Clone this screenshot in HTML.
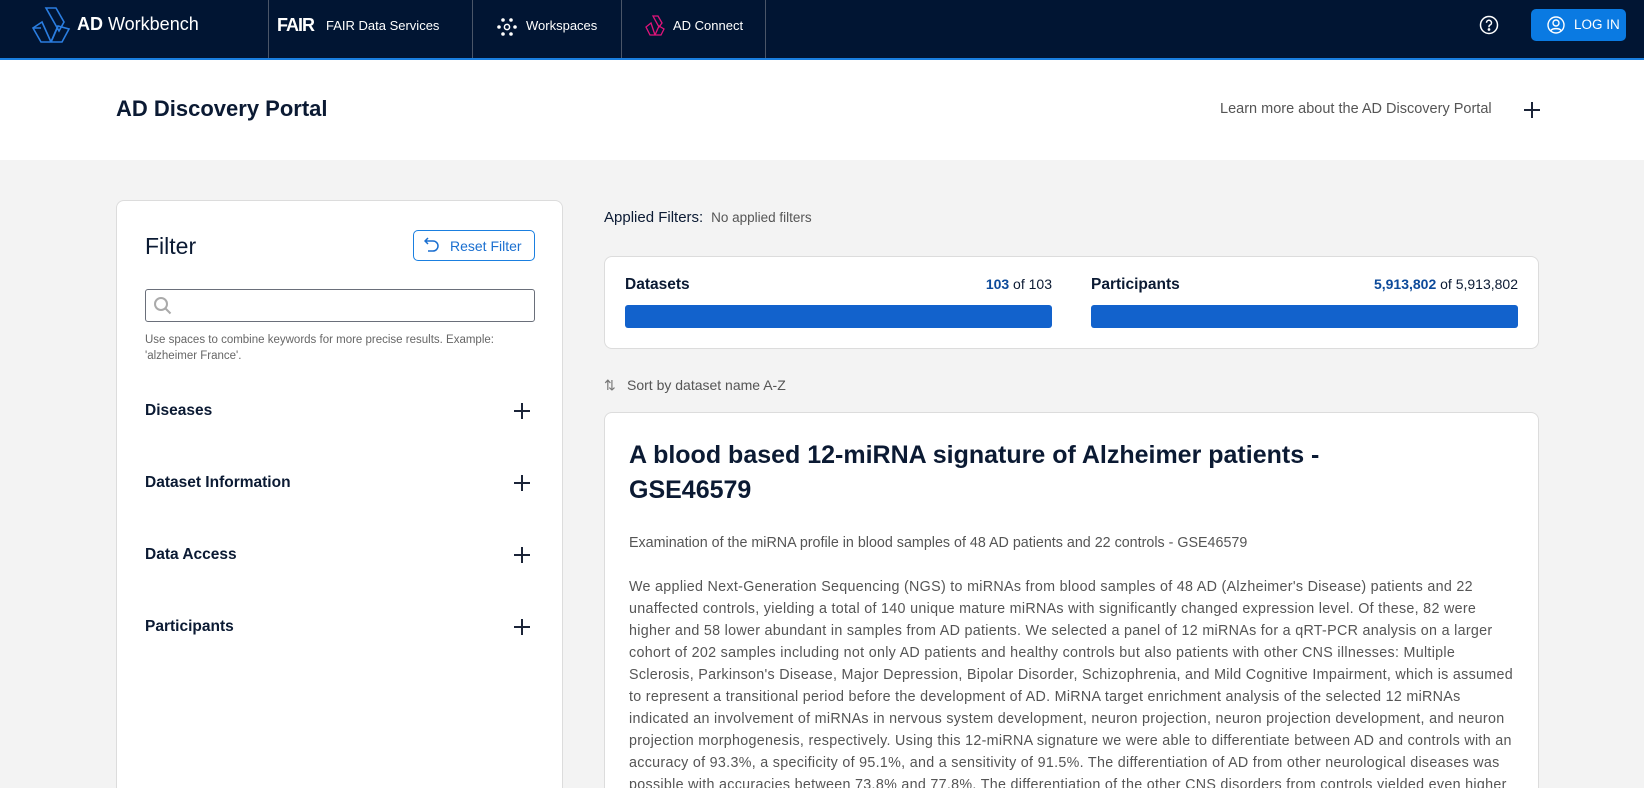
<!DOCTYPE html>
<html><head><meta charset="utf-8"><style>
*{box-sizing:border-box;margin:0;padding:0}
html,body{width:1644px;height:788px;overflow:hidden}
body{background:#f3f3f3;font-family:"Liberation Sans",sans-serif;color:#0b1a33}
#w{position:relative;width:1644px;height:788px;overflow:hidden}
.a{position:absolute}
.hdr{left:0;top:0;width:1644px;height:58px;background:#011533}
.bl{left:0;top:58px;width:1644px;height:2px;background:#1a7fe0}
.div{top:0;width:1px;height:58px;background:#4a5568}
.nav{color:#fff;font-size:13px;top:18px}
.banner{left:0;top:60px;width:1644px;height:100px;background:#fff}
.card{background:#fff;border:1px solid #dcdcdc;border-radius:8px}
.plus{width:16px;height:16px}
.plus:before,.plus:after{content:"";position:absolute;background:#1b2438}
.plus:before{left:7px;top:0;width:1.6px;height:16px}
.plus:after{top:7px;left:0;height:1.6px;width:16px}
.row{left:145px;font-size:15.5px;font-weight:bold}
.bar{height:23px;background:#1262cc;border-radius:3px}
p.t{font-size:14.3px;color:#555;line-height:22px}
p.p{font-size:14.3px;letter-spacing:0.3px;color:#555;line-height:22px;white-space:nowrap}
</style></head><body><div id="w">
<div class="a hdr"></div><div class="a bl"></div>
<svg class="a" style="left:26px;top:6px" width="48" height="38" viewBox="0 0 48 38" fill="none" stroke="#2a7de0" stroke-width="1.6"><path d="M20 2h10l8 14-5 9-13-23zM16 16l-9 6 8 14h10L16 16zM32 20l-7 16h11l7-13z"/><path d="M7 22h8M25 36l7-16"/></svg>
<div class="a" style="left:77px;top:14px;color:#fff;font-size:18px"><b>AD</b> Workbench</div>
<div class="a div" style="left:268px"></div><div class="a div" style="left:472px"></div><div class="a div" style="left:621px"></div><div class="a div" style="left:765px"></div>
<div class="a" style="left:277px;top:15px;color:#fff;font-size:18px;font-weight:900;letter-spacing:-1px">FAIR</div>
<div class="a nav" style="left:326px">FAIR Data Services</div>
<svg class="a" style="left:497px;top:17px" width="20" height="20" viewBox="0 0 20 20" fill="#fff"><circle cx="10" cy="10" r="2.6" fill="none" stroke="#fff" stroke-width="1.5"/><circle cx="6" cy="3" r="1.8"/><circle cx="14" cy="3" r="1.8"/><circle cx="6" cy="17" r="1.8"/><circle cx="14" cy="17" r="1.8"/><circle cx="2" cy="10" r="1.8"/><circle cx="18" cy="10" r="1.8"/></svg>
<div class="a nav" style="left:526px">Workspaces</div>
<svg class="a" style="left:645px;top:15px" width="20" height="22" viewBox="0 0 20 22" fill="none" stroke="#e0147a" stroke-width="1.3"><path d="M8 1h5l4 7-3 4-6-11zM6 8l-5 4 4 8h5L6 8zM14 11l-4 9h6l3-6z"/></svg>
<div class="a nav" style="left:673px">AD Connect</div>
<svg class="a" style="left:1479px;top:15px" width="20" height="20" viewBox="0 0 20 20" fill="none" stroke="#fff" stroke-width="1.5"><circle cx="10" cy="10" r="8.5"/><path d="M7.5 7.8a2.5 2.5 0 1 1 3.4 2.3c-.6.3-.9.8-.9 1.5v.6"/><circle cx="10" cy="14.5" r=".6" fill="#fff"/></svg>
<div class="a" style="left:1531px;top:9px;width:95px;height:32px;background:#0a7ae2;border-radius:5px"></div>
<svg class="a" style="left:1547px;top:16px" width="18" height="18" viewBox="0 0 18 18" fill="none" stroke="#fff" stroke-width="1.4"><circle cx="9" cy="9" r="8"/><circle cx="9" cy="7" r="3"/><path d="M4 14.5c1.5-2.5 8.5-2.5 10 0"/></svg>
<div class="a" style="left:1574px;top:17px;color:#fff;font-size:13.5px">LOG IN</div>
<div class="a banner"></div>
<div class="a" style="left:116px;top:96px;font-size:22px;font-weight:bold">AD Discovery Portal</div>
<div class="a" style="left:1220px;top:101px;font-size:14.5px;color:#555">Learn more about the AD Discovery Portal</div>
<div class="a plus" style="left:1524px;top:102px"></div>
<div class="a card" style="left:116px;top:200px;width:447px;height:600px"></div>
<div class="a" style="left:145px;top:233px;font-size:23px">Filter</div>
<div class="a" style="left:413px;top:230px;width:122px;height:31px;border:1px solid #1a7fe0;border-radius:5px;color:#1a6fd0;font-size:14px;padding:7px 0 0 36px">Reset Filter</div>
<svg class="a" style="left:424px;top:237px" width="16" height="17" viewBox="0 0 16 17" fill="none" stroke="#1a6fd0" stroke-width="1.5"><path d="M4 1L1 4l3 3M1 4h8a5 5 0 0 1 0 10H4"/></svg>
<div class="a" style="left:145px;top:289px;width:390px;height:33px;border:1px solid #6a6f7a;border-radius:3px;background:#fff"></div>
<svg class="a" style="left:153px;top:296px" width="20" height="20" viewBox="0 0 20 20" fill="none" stroke="#aaa" stroke-width="2"><circle cx="8" cy="8" r="6"/><path d="M12.5 12.5l5 5"/></svg>
<div class="a" style="left:145px;top:332px;width:395px;font-size:11.5px;color:#666;line-height:16px">Use spaces to combine keywords for more precise results. Example: 'alzheimer France'.</div>
<div class="a row" style="top:402px">Diseases</div><div class="a plus" style="left:514px;top:403px"></div>
<div class="a row" style="top:474px">Dataset Information</div><div class="a plus" style="left:514px;top:475px"></div>
<div class="a row" style="top:546px">Data Access</div><div class="a plus" style="left:514px;top:547px"></div>
<div class="a row" style="top:618px">Participants</div><div class="a plus" style="left:514px;top:619px"></div>
<div class="a" style="left:604px;top:209px;font-size:15px">Applied Filters: <span style="font-size:13.5px;color:#555">&nbsp;No applied filters</span></div>
<div class="a card" style="left:604px;top:256px;width:935px;height:93px"></div>
<div class="a" style="left:625px;top:276px;font-size:15.5px;font-weight:bold">Datasets</div>
<div class="a" style="left:852px;width:200px;text-align:right;top:276px;font-size:14px"><b style="color:#0d4a9a">103</b> of 103</div>
<div class="a bar" style="left:625px;top:305px;width:427px"></div>
<div class="a" style="left:1091px;top:276px;font-size:15.5px;font-weight:bold">Participants</div>
<div class="a" style="left:1218px;width:300px;text-align:right;top:276px;font-size:14px"><b style="color:#0d4a9a">5,913,802</b> of 5,913,802</div>
<div class="a bar" style="left:1091px;top:305px;width:427px"></div>
<div class="a" style="left:604px;top:377px;font-size:14px;color:#777">⇅</div>
<div class="a" style="left:627px;top:377px;font-size:14px;color:#555">Sort by dataset name A-Z</div>
<div class="a card" style="left:604px;top:412px;width:935px;height:390px"></div>
<div class="a" style="left:629px;top:438px;width:700px;font-size:25px;font-weight:bold;line-height:35px">A blood based 12-miRNA signature of Alzheimer patients -<br>GSE46579</div>
<p class="a t" style="left:629px;top:532px">Examination of the miRNA profile in blood samples of 48 AD patients and 22 controls - GSE46579</p>
<div class="a" style="left:629px;top:576px;width:1000px;height:212px;overflow:hidden"><p class="p">We applied Next-Generation Sequencing (NGS) to miRNAs from blood samples of 48 AD (Alzheimer's Disease) patients and 22<br>unaffected controls, yielding a total of 140 unique mature miRNAs with significantly changed expression level. Of these, 82 were<br>higher and 58 lower abundant in samples from AD patients. We selected a panel of 12 miRNAs for a qRT-PCR analysis on a larger<br>cohort of 202 samples including not only AD patients and healthy controls but also patients with other CNS illnesses: Multiple<br>Sclerosis, Parkinson's Disease, Major Depression, Bipolar Disorder, Schizophrenia, and Mild Cognitive Impairment, which is assumed<br>to represent a transitional period before the development of AD. MiRNA target enrichment analysis of the selected 12 miRNAs<br>indicated an involvement of miRNAs in nervous system development, neuron projection, neuron projection development, and neuron<br>projection morphogenesis, respectively. Using this 12-miRNA signature we were able to differentiate between AD and controls with an<br>accuracy of 93.3%, a specificity of 95.1%, and a sensitivity of 91.5%. The differentiation of AD from other neurological diseases was<br>possible with accuracies between 73.8% and 77.8%. The differentiation of the other CNS disorders from controls yielded even higher</p></div>
</div></body></html>
